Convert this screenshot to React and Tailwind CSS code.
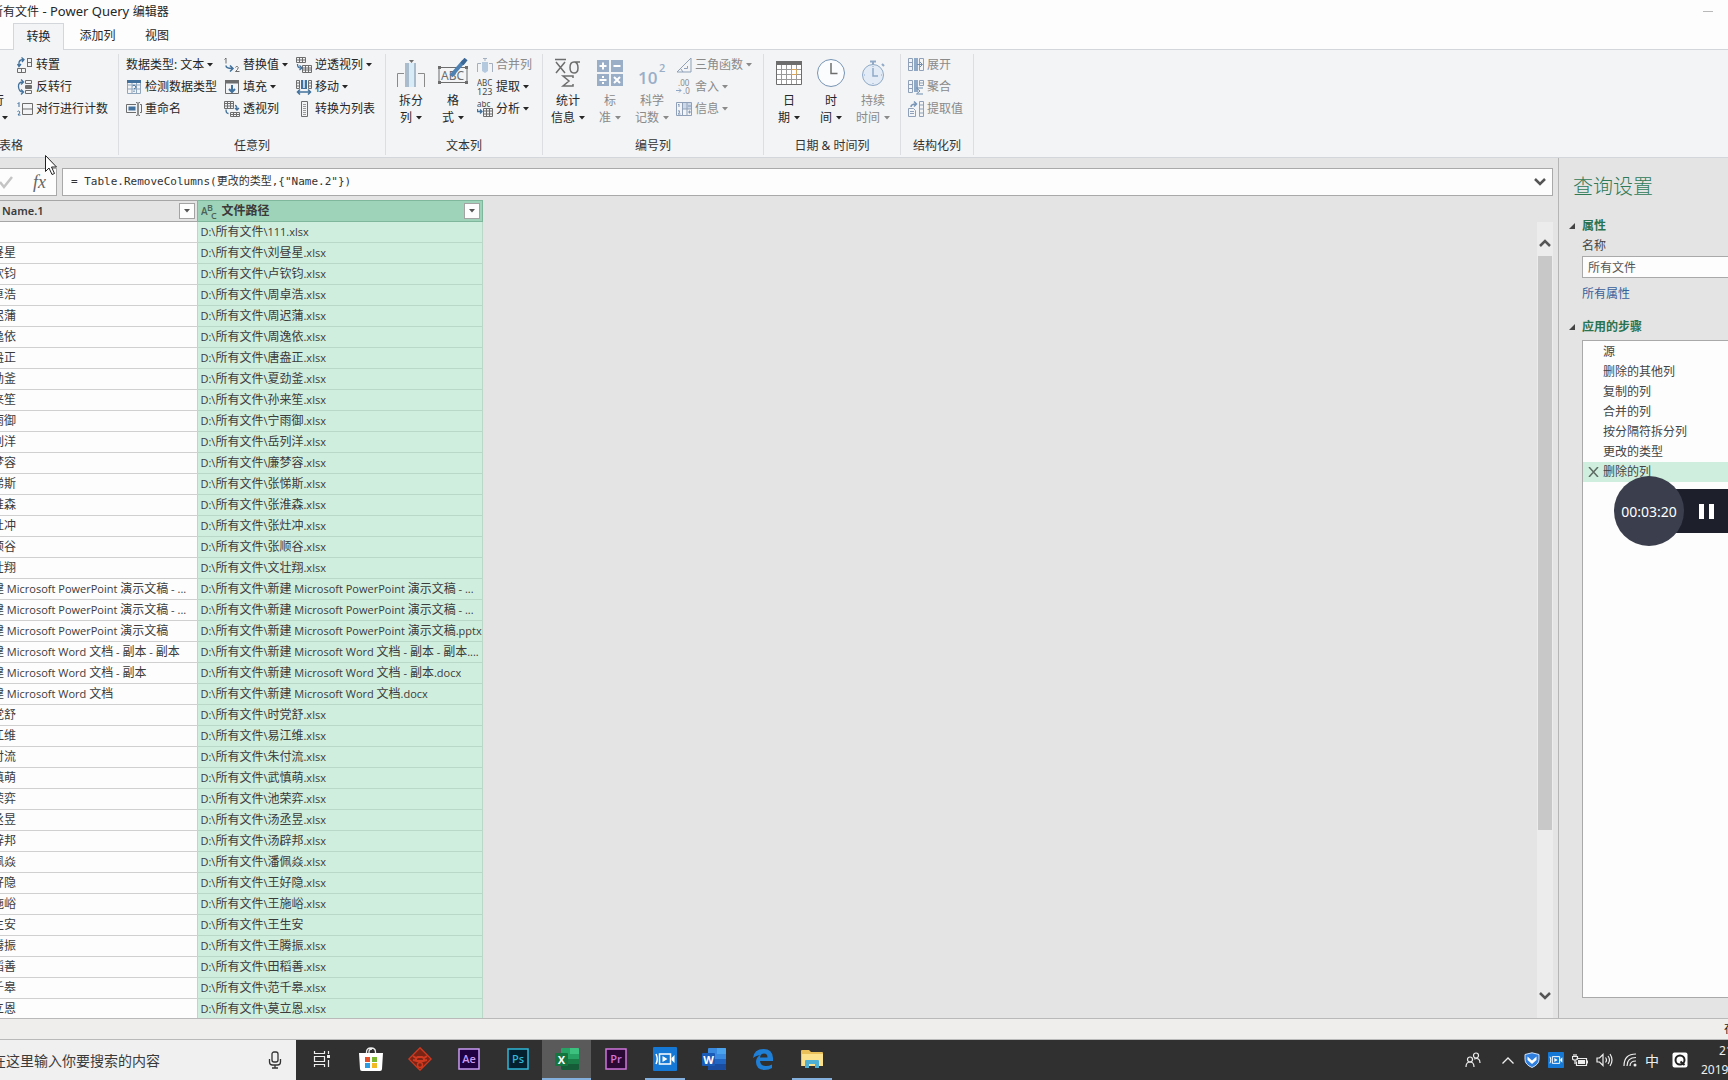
import clsx from "clsx";

const FILES = [
  { name: "", path: "111.xlsx" },
  { name: "刘昼星" },
  { name: "卢钦钧" },
  { name: "周卓浩" },
  { name: "周迟蒲" },
  { name: "周逸依" },
  { name: "唐盎正" },
  { name: "夏劲釜" },
  { name: "孙来笙" },
  { name: "宁雨御" },
  { name: "岳列洋" },
  { name: "廉梦容" },
  { name: "张悌斯" },
  { name: "张淮森" },
  { name: "张灶冲" },
  { name: "张顺谷" },
  { name: "文壮翔" },
  { name: "新建 Microsoft PowerPoint 演示文稿 - ...", path: "新建 Microsoft PowerPoint 演示文稿 - ..." },
  { name: "新建 Microsoft PowerPoint 演示文稿 - ...", path: "新建 Microsoft PowerPoint 演示文稿 - ..." },
  { name: "新建 Microsoft PowerPoint 演示文稿", path: "新建 Microsoft PowerPoint 演示文稿.pptx" },
  { name: "新建 Microsoft Word 文档 - 副本 - 副本", path: "新建 Microsoft Word 文档 - 副本 - 副本...." },
  { name: "新建 Microsoft Word 文档 - 副本", path: "新建 Microsoft Word 文档 - 副本.docx" },
  { name: "新建 Microsoft Word 文档", path: "新建 Microsoft Word 文档.docx" },
  { name: "时党舒" },
  { name: "易江维" },
  { name: "朱付流" },
  { name: "武慎萌" },
  { name: "池荣弈" },
  { name: "汤丞昱" },
  { name: "汤辟邦" },
  { name: "潘佩焱" },
  { name: "王好隐" },
  { name: "王施峪" },
  { name: "王生安", path: "王生安" },
  { name: "王腾振" },
  { name: "田稻善" },
  { name: "范千皋" },
  { name: "莫立恩" },
];

const STEPS = ["源", "删除的其他列", "复制的列", "合并的列", "按分隔符拆分列", "更改的类型", "删除的列"];

const BLUE = "#41719c";
const GRAY = "#6d6d6d";

/* latin runs are set one size smaller than the chinese ones */
function Mixed({ text }) {
  return text.split(/([\x20-\x7e]+)/).map((part, i) =>
    i % 2 ? (
      <span key={i} className="font-['Open_Sans',sans-serif] text-[11px]">
        {part}
      </span>
    ) : (
      part
    )
  );
}

/* ---------- small ribbon icons, 16x16 ---------- */

function Icon({ children, size = 16, className }) {
  return (
    <svg
      width={size}
      height={size}
      viewBox={`0 0 ${size} ${size}`}
      fill="none"
      stroke={GRAY}
      className={clsx("shrink-0", className)}
      aria-hidden="true"
    >
      {children}
    </svg>
  );
}

const TransposeIcon = () => (
  <Icon>
    <rect x="10.5" y="1.5" width="4" height="8" />
    <path d="M10.5 5.5h4M.5 11.5h8v4h-8zM4.500 11.500v4" />
    <path d="M2 9V6q0-3 4-3.500M4.500 .5 7 2.500 5 5M.5 7 2 9.500 4 7" stroke={BLUE} strokeWidth="1.300" />
  </Icon>
);

const ReverseIcon = () => (
  <Icon>
    <path d="M8.500 1.500h6v3h-6zM8.500 6.500h6v3h-6zM8.500 11.500h6v3h-6z" />
    <path d="M9 8h5" strokeWidth="2" />
    <path d="M6 3Q1 3 1.500 8T6 13M4 .5 6.500 3 4 5.500M4 10.500 6.500 13 4 15.500" stroke={BLUE} strokeWidth="1.300" />
  </Icon>
);

const CountIcon = () => (
  <Icon>
    <path d="M5.500 2.500h10v11h-10zM5.500 8h10" />
    <path d="M.5 3 2 1.500V6M.5 10.500q1-1 2 0t-1.500 3.500h2.500" stroke={BLUE} />
  </Icon>
);

const DetectIcon = () => (
  <Icon>
    <path d="M1.500 1.500h13v13h-13zM1.500 6h13M1.500 10h13M6 3v12M10.500 3v12" stroke="#8fa6bd" />
    <path d="M1 1h14v3H1z" fill={BLUE} stroke="none" />
    <path d="M6.500 7q1.500-2 3 0T8 10M8 11.500v1.500" stroke={BLUE} />
  </Icon>
);

const RenameIcon = () => (
  <Icon>
    <path d="M10 3.500H.5v8H10M14 3.500h1.500v8H14" />
    <path d="M2.500 5.500h7v4h-7z" fill={BLUE} stroke="none" />
    <path d="M10 1.500q2 0 2 1v11q0 1-2 1M14 1.500q-2 0-2 1v11q0 1 2 1" />
  </Icon>
);

const ReplaceIcon = () => (
  <Icon>
    <path d="M.5 2.500 2 1v5.500" />
    <path d="M2 8.500q0 3 6 3M6 8.500l3 3-3 3" stroke={BLUE} strokeWidth="1.500" />
    <path d="M11.500 10.500q.5-1.500 2-1t0 3l-2 2h4" />
  </Icon>
);

const FillIcon = () => (
  <Icon>
    <path d="M1.500 2.500h13v12h-13z" />
    <path d="M1 1h14v3.500H1z" fill={GRAY} stroke="none" />
    <path d="M8 6v7M5 10l3 3 3-3" stroke={BLUE} strokeWidth="2" />
  </Icon>
);

const PivotIcon = () => (
  <Icon>
    <path d="M.5 .5h9v7h-9zM.5 2.500h9M.5 5h9M3.500 1v6M6.500 1v6" />
    <path d="M6.500 11.500h9v4h-9zM6.500 13.500h9M9.500 12v3M12.500 12v3" />
    <path d="M2 8.500q0 4 2.500 4M11 4.500q2 0 2 4M11 7l2 2 2-2" stroke={BLUE} strokeWidth="1.300" />
  </Icon>
);

const UnpivotIcon = () => (
  <Icon>
    <path d="M.5 .5h9v5h-9zM.5 3h9M3.500 .5v5M6.500 .5v5M6.500 8.500h9v7h-9zM6.500 11h9M6.500 13h9M9.500 9v6M12.500 9v6" />
    <path d="M1.500 7q0 4 3 4M3.500 8.500 6 11l-2.500 2" stroke={BLUE} strokeWidth="1.300" />
  </Icon>
);

const MoveIcon = () => (
  <Icon>
    <path d="M.5 1.500h3v8h-3zM12.500 1.500h3v8h-3zM1 4h3M12.500 4h3M1 7h3M12.500 7h3" />
    <path d="M5 1h6v9H5z" fill={BLUE} stroke="none" />
    <path d="M8 1v8" stroke="#b8d3ea" strokeWidth="2" />
    <path d="M1.500 13h13M4 10.500 1.500 13 4 15.500M12 10.500l2.500 2.500-2.500 2.500" stroke={BLUE} strokeWidth="1.500" />
  </Icon>
);

const ListIcon = () => (
  <Icon>
    <path d="M5.500 .5h6v15h-6z" />
    <path d="M7 3.500h3M7 5.500h3M7 7.500h3M7 9.500h3M7 11.500h3M7 13.500h3" stroke="#9a9a9a" />
  </Icon>
);

const MergeIcon = () => (
  <Icon>
    <path d="M4 6.500H.5V15M12 6.500h3.500V15" stroke="#a4afc0" />
    <path d="M5 5h6v9l-3 2-3-2z" fill="#b4c8de" stroke="none" />
    <path d="M6 1.500h4M8 1v3" stroke="#a4afc0" />
  </Icon>
);

const ExtractIcon = () => (
  <Icon>
    <text x="0" y="7" fontSize="8" fontFamily="Noto Sans" fill="#4a4a4a" stroke="none">ABC</text>
    <text x="0" y="16" fontSize="9" fontFamily="Noto Sans" fill="#4a4a4a" stroke="none">123</text>
  </Icon>
);

const ParseIcon = () => (
  <Icon>
    <text x="0" y="6" fontSize="8" fontFamily="Noto Sans" fill="#4a4a4a" stroke="none">abc</text>
    <path d="M6.500 7.500h9v8h-9zM6.500 10h9M6.500 13h9M9.500 7.500v8M12.500 7.500v8" />
    <path d="M.5 8v2.500h4M3 8.500l2 2-2 2" stroke={BLUE} strokeWidth="1.300" />
  </Icon>
);

const TrigIcon = () => (
  <Icon>
    <path d="M15 1v14H1zM11.500 9v2.500H8M5 12l2 3" stroke="#8fa0b8" />
  </Icon>
);

const RoundIcon = () => (
  <Icon>
    <text x="2" y="7" fontSize="8" fontFamily="Noto Sans" fill="#8a8a8a" stroke="none">.00</text>
    <text x="7" y="15" fontSize="8" fontFamily="Noto Sans" fill="#8a8a8a" stroke="none">.0</text>
    <path d="M0 11.500h5M3 9.500l2 2-2 2" stroke="#8fa6c4" />
  </Icon>
);

const NumberInfoIcon = () => (
  <Icon>
    <path d="M7 2h8v6H7z" fill="#cdd9e8" stroke="none" />
    <path d="M.5 1.500h15v13H.5zM6.500 2v12M6.500 8h9M11 2v12" stroke="#8fa0b8" />
    <path d="M2 4l1-1v3M2 10q2-1 1.500 1T2 13h2.500M12 11h3M13.500 9.500v3M12 5h3" stroke="#8098b8" />
  </Icon>
);

const ExpandIcon = () => (
  <Icon>
    <path d="M.5 1.500h4v12h-4zM.5 5.500h4M.5 9.500h4M11.500 1.500h4v12h-4z" stroke="#8fa0b8" />
    <path d="M6 1h4v13H6z" fill="#8fa9c6" stroke="none" />
    <path d="M9 7.500h5M12 5l2.500 2.500L12 10" stroke="#6f8db0" />
  </Icon>
);

const AggregateIcon = () => (
  <Icon>
    <path d="M.5 1.500h4v12h-4zM.5 5.500h4M.5 9.500h4M11.500 1.500h4v5h-4zM11.500 4h4" stroke="#8fa0b8" />
    <path d="M6 1h4v12H6z" fill="#8fa9c6" stroke="none" />
    <path d="M15 9H8.500l3.500 3-3.500 3H15" stroke="#6f8db0" />
  </Icon>
);

const ExtractValuesIcon = () => (
  <Icon>
    <path d="M.5 7.500h5l2 2v6h-7zM2 10.500h4M2 12.500h4M11.500 .5h4v15h-4zM11.500 4h4M11.500 8h4M11.500 12h4" stroke="#8fa0b8" />
    <path d="M3 6q0-3 5-3M6 .5 8.500 3 6 5.500" stroke="#7895b8" strokeWidth="1.500" />
  </Icon>
);

/* ---------- large ribbon icons, 30x30 ---------- */

const SplitIcon = () => (
  <Icon size={30}>
    <path d="M8 15.500H1.500V29M22 15.500h6.500V29" stroke="#8a8a8a" />
    <path d="M9 5h11v24H9z" fill="#a9bccd" stroke="none" />
    <path d="M13 5h5v24h-5z" fill="#d8ecf8" stroke="none" />
    <path d="M13 2h5l-2.500 3z" fill={GRAY} stroke="none" />
  </Icon>
);

const FormatIcon = () => (
  <Icon size={30}>
    <path d="M1 9.500h28v15H1z" />
    <text x="3" y="22" fontSize="12" fontFamily="Noto Sans" fill={GRAY} stroke="none">ABC</text>
    <path d="M13 18 26 3" stroke="#4d80b3" strokeWidth="4" />
    <path d="m24 6 4-5" stroke="#3a6796" strokeWidth="4" />
    <path d="M0 8h3v3H0zM27 8h3v3h-3zM0 23h3v3H0zM27 23h3v3h-3z" fill={GRAY} stroke="none" />
  </Icon>
);

const StatsIcon = () => (
  <Icon size={30}>
    <path d="M2 1.500h11M3 4l9 11M12 4 3 15" strokeWidth="1.500" />
    <path d="M27 4h-6q-4 0-4 5.500t4 5.500 4-5-3-6" strokeWidth="1.500" />
    <path d="M20 20v-2H10l6 5-6 5h10v-2" strokeWidth="1.500" />
  </Icon>
);

const StandardIcon = () => (
  <Icon size={30}>
    <path d="M2 2h12v12H2zM16 2h12v12H16zM2 16h12v12H2zM16 16h12v12H16z" fill="#9aaec8" stroke="none" />
    <path d="M4.500 8h7M8 4.500v7M18.500 8h7M4.500 22h7M8 18v2M8 24v2M19 19l6 6M25 19l-6 6" stroke="#fff" strokeWidth="2" />
  </Icon>
);

const ScienceIcon = () => (
  <Icon size={30}>
    <text x="1" y="26" fontSize="17" fontWeight="600" fontFamily="Open Sans" fill="#9aaec8" stroke="none">10</text>
    <text x="22" y="14" fontSize="11" fontWeight="600" fontFamily="Open Sans" fill="#9aaec8" stroke="none">2</text>
  </Icon>
);

const CalendarIcon = () => (
  <Icon size={30}>
    <path d="M2.500 4.500h25v22h-25z" fill="#fff" />
    <path d="M2 3h26v4H2z" fill={GRAY} stroke="none" />
    <path d="M3 11.500h24M3 16.500h24M3 21.500h24M7.500 7v19M12.500 7v19M17.500 7v19M22.500 7v19" stroke="#9a9a9a" />
    <path d="M17.500 11.500h5v5h-5z" stroke="#d9a75c" />
  </Icon>
);

const ClockIcon = () => (
  <Icon size={30}>
    <circle cx="15" cy="15" r="13.500" fill="#fafcfe" stroke="#7794b4" />
    <path d="M15 5v10.500h6.500" strokeWidth="1.500" />
  </Icon>
);

const DurationIcon = () => (
  <Icon size={30}>
    <path d="M12 3.500h6M15 3v4M24 6l2 2" stroke="#8fa9c6" strokeWidth="2" />
    <circle cx="15" cy="17" r="10.500" fill="#e3ecf6" stroke="#8fa9c6" />
    <path d="M15 10v8h5" stroke="#8fa9c6" strokeWidth="1.500" />
    <path d="M15 8v1M15 25v1M6 17h1M23 17h1" stroke="#8fa9c6" />
  </Icon>
);

/* ---------- ribbon parts ---------- */

const Caret = () => (
  <svg width="6" height="4" viewBox="0 0 6 4" className="shrink-0 fill-current" aria-hidden="true">
    <path d="M0 0h6L3 3.500z" />
  </svg>
);

function SmallButton({ icon, label, menu, disabled }) {
  return (
    <button
      disabled={disabled}
      className={clsx(
        "flex h-[22px] items-center gap-[3px] whitespace-nowrap",
        disabled ? "text-[#8a8a8a]" : "text-[#262626]"
      )}
    >
      {icon}
      <span>{label}</span>
      {menu && <Caret />}
    </button>
  );
}

function BigButton({ icon, top, bottom, disabled }) {
  return (
    <button
      disabled={disabled}
      className={clsx(
        "flex w-[42px] shrink-0 flex-col items-center whitespace-nowrap leading-[17px]",
        disabled ? "text-[#8a8a8a]" : "text-[#262626]"
      )}
    >
      <span className="flex h-[38px] items-start pt-1">{icon}</span>
      <span>{top}</span>
      <span className="flex items-center gap-1">
        {bottom}
        <Caret />
      </span>
    </button>
  );
}

function Group({ label, className, children }) {
  return (
    <section className={clsx("flex shrink-0 flex-col border-r border-[#dcdee1]", className)}>
      <div className="flex flex-1">{children}</div>
      <h2 className="h-[18px] text-center leading-[18px] text-[#333]">{label}</h2>
    </section>
  );
}

function Ribbon() {
  return (
    <div className="flex h-[109px] border-y border-[#d3d6da] bg-[#f2f4f6] pt-1 pb-[2px]">
      <Group label="表格" className="w-[215px]">
        <div className="flex flex-1 justify-end gap-[9px] pr-[10px]">
          <button className="flex flex-col items-end justify-start pt-[38px] leading-[17px] text-[#262626]">
            <span className="pr-1">行</span>
            <span className="flex items-center gap-1">
              题
              <Caret />
            </span>
          </button>
          <div>
            <SmallButton icon={<TransposeIcon />} label="转置" />
            <SmallButton icon={<ReverseIcon />} label="反转行" />
            <SmallButton icon={<CountIcon />} label="对行进行计数" />
          </div>
        </div>
      </Group>

      <Group label="任意列" className="w-[267px]">
        <div className="w-[98px] shrink-0 pl-[7px]">
          <SmallButton label="数据类型: 文本" menu />
          <SmallButton icon={<DetectIcon />} label="检测数据类型" />
          <SmallButton icon={<RenameIcon />} label="重命名" />
        </div>
        <div className="ml-[7px] w-[72px]">
          <SmallButton icon={<ReplaceIcon />} label="替换值" menu />
          <SmallButton icon={<FillIcon />} label="填充" menu />
          <SmallButton icon={<PivotIcon />} label="透视列" />
        </div>
        <div>
          <SmallButton icon={<UnpivotIcon />} label="逆透视列" menu />
          <SmallButton icon={<MoveIcon />} label="移动" menu />
          <SmallButton icon={<ListIcon />} label="转换为列表" />
        </div>
      </Group>

      <Group label="文本列" className="w-[157px]">
        <div className="flex pl-1">
          <BigButton icon={<SplitIcon />} top="拆分" bottom="列" />
          <BigButton icon={<FormatIcon />} top="格" bottom="式" />
        </div>
        <div className="pl-[3px]">
          <SmallButton icon={<MergeIcon />} label="合并列" disabled />
          <SmallButton icon={<ExtractIcon />} label="提取" menu />
          <SmallButton icon={<ParseIcon />} label="分析" menu />
        </div>
      </Group>

      <Group label="编号列" className="w-[221px]">
        <div className="flex pl-1">
          <BigButton icon={<StatsIcon />} top="统计" bottom="信息" />
          <BigButton icon={<StandardIcon />} top="标" bottom="准" disabled />
          <BigButton icon={<ScienceIcon />} top="科学" bottom="记数" disabled />
        </div>
        <div className="pl-[3px]">
          <SmallButton icon={<TrigIcon />} label="三角函数" menu disabled />
          <SmallButton icon={<RoundIcon />} label="舍入" menu disabled />
          <SmallButton icon={<NumberInfoIcon />} label="信息" menu disabled />
        </div>
      </Group>

      <Group label="日期 & 时间列" className="w-[137px]">
        <div className="flex pl-1">
          <BigButton icon={<CalendarIcon />} top="日" bottom="期" />
          <BigButton icon={<ClockIcon />} top="时" bottom="间" />
          <BigButton icon={<DurationIcon />} top="持续" bottom="时间" disabled />
        </div>
      </Group>

      <Group label="结构化列" className="w-[73px]">
        <div className="pl-[7px]">
          <SmallButton icon={<ExpandIcon />} label="展开" disabled />
          <SmallButton icon={<AggregateIcon />} label="聚合" disabled />
          <SmallButton icon={<ExtractValuesIcon />} label="提取值" disabled />
        </div>
      </Group>
    </div>
  );
}

/* ---------- editor ---------- */

const Chevron = ({ up }) => (
  <svg width="12" height="8" viewBox="0 0 12 8" fill="none" stroke="#555" strokeWidth="2.500" aria-hidden="true">
    <path d={up ? "M1 7l5-5 5 5" : "M1 1l5 5 5-5"} />
  </svg>
);

function FormulaBar() {
  return (
    <div className="flex h-7 gap-[5px]">
      <div className="flex w-[153px] items-center justify-end gap-5 border border-[#a9a9a9] bg-[#fdfdfd] pr-[10px]">
        <svg width="14" height="14" viewBox="0 0 14 14" fill="none" stroke="#c4c4c4" strokeWidth="2.500" aria-hidden="true">
          <path d="M1 7l4 5 8-10" />
        </svg>
        <span className="font-['Liberation_Serif',serif] text-[18px] leading-6 text-[#666] italic">fx</span>
      </div>
      <div className="flex flex-1 items-center border border-[#a9a9a9] bg-[#fdfdfd] pr-[6px]">
        <input
          aria-label="公式"
          defaultValue={'= Table.RemoveColumns(更改的类型,{"Name.2"})'}
          className="flex-1 bg-transparent pl-2 font-['DejaVu_Sans_Mono','Noto_Sans_CJK_SC',monospace] text-[11px] text-[#333] outline-none"
        />
        <button aria-label="展开公式栏">
          <Chevron />
        </button>
      </div>
    </div>
  );
}

const FilterButton = () => (
  <button
    aria-label="筛选"
    className="flex h-4 w-4 shrink-0 items-center justify-center border border-[#a3a3a3] bg-[#fdfdfd] text-[#555]"
  >
    <Caret />
  </button>
);

function DataGrid() {
  return (
    <table className="w-[579px] shrink-0 table-fixed border-collapse self-start text-left text-[#3b3b3b]">
      <thead>
        <tr className="h-[21px]">
          <th className="w-[72px] border-y border-[#a6a6a6] p-0" />
          <th className="w-[221px] border-y border-[#a6a6a6] p-0">
            <div className="flex items-center justify-between pr-[2px] pl-[26px]">
              <span className="text-[11px] font-semibold">Name.1</span>
              <FilterButton />
            </div>
          </th>
          <th className="border border-[#7fb79c] bg-[#9fd3b9] p-0">
            <div className="flex items-center pr-[2px] pl-[3px]">
              <svg width="17" height="16" viewBox="0 0 17 16" fill="#4b6356" className="mr-1" aria-hidden="true">
                <text x="0" y="12" fontSize="10" fontWeight="600" fontFamily="Open Sans">A</text>
                <text x="6" y="8" fontSize="9" fontWeight="600" fontFamily="Open Sans">B</text>
                <text x="10" y="16" fontSize="9" fontWeight="600" fontFamily="Open Sans">C</text>
              </svg>
              <span className="flex-1 font-bold">文件路径</span>
              <FilterButton />
            </div>
          </th>
        </tr>
      </thead>
      <tbody>
        {FILES.map((f, i) => (
          <tr key={i} className="h-[21px]">
            <td className="border-b border-[#d0d0d0] bg-[#fdfdfd] p-0" />
            <td className="overflow-hidden border-b border-[#d0d0d0] bg-[#fdfdfd] p-0 pl-1 leading-5 whitespace-nowrap">
              <Mixed text={f.name} />
            </td>
            <td className="border border-[#b9d8c8] bg-[#d0eede] p-0 pl-[3px] leading-5 whitespace-nowrap">
              <Mixed text={"D:\\所有文件\\" + (f.path ?? f.name + ".xlsx")} />
            </td>
          </tr>
        ))}
      </tbody>
    </table>
  );
}

function ScrollBar() {
  return (
    <div className="mt-[22px] flex w-4 flex-col items-center bg-[#ececec]">
      <button aria-label="向上滚动" className="flex h-[34px] items-center pt-2">
        <Chevron up />
      </button>
      <div className="flex w-full flex-1 flex-col px-px">
        <div className="basis-4/5 bg-[#c8c8c8]" />
      </div>
      <button aria-label="向下滚动" className="flex h-11 items-center">
        <Chevron />
      </button>
    </div>
  );
}

function SectionTitle({ children }) {
  return (
    <h3 className="flex h-5 items-center gap-[7px] font-bold text-[#2a7350]">
      <svg width="6" height="6" viewBox="0 0 6 6" fill="#444" aria-hidden="true">
        <path d="M6 0v6H0z" />
      </svg>
      {children}
    </h3>
  );
}

function QuerySettings() {
  return (
    <aside className="flex w-[210px] shrink-0 flex-col border-l border-[#b5b5b5] pt-[14px] pb-5 text-[#444]">
      <h2 className="pl-[14px] text-[20px] leading-[30px] font-light text-[#2f7a57]">查询设置</h2>
      <div className="flex flex-col pt-[14px] pl-[10px]">
        <SectionTitle>属性</SectionTitle>
        <div className="flex flex-col items-start pl-[13px]">
          <label htmlFor="query-name" className="leading-5">
            名称
          </label>
          <input
            id="query-name"
            defaultValue="所有文件"
            className="h-[22px] w-full border border-[#a9a9a9] bg-[#fdfdfd] pl-[5px] text-[#555] outline-none"
          />
          <a href="#props" className="mt-[6px] leading-5 text-[#3a5f9a]">
            所有属性
          </a>
        </div>
      </div>
      <div className="flex flex-1 flex-col pt-[13px] pl-[10px]">
        <SectionTitle>应用的步骤</SectionTitle>
        <ul className="mt-[3px] ml-[13px] flex-1 border border-[#a9a9a9] bg-[#fdfdfd] pt-px">
          {STEPS.map((step, i) => {
            const active = i === STEPS.length - 1;
            return (
              <li key={step} className={clsx("flex h-5 items-center pl-[5px]", active && "bg-[#d0eede]")}>
                <span className="flex w-[15px]">
                  {active && (
                    <button aria-label="删除步骤">
                      <svg width="11" height="10" viewBox="0 0 11 10" fill="none" stroke="#5c6b63" strokeWidth="1.500" aria-hidden="true">
                        <path d="M1 0l9 10M10 0 1 10" />
                      </svg>
                    </button>
                  )}
                </span>
                {step}
              </li>
            );
          })}
        </ul>
      </div>
    </aside>
  );
}

/* ---------- taskbar ---------- */

function AdobeIcon({ label, color, bg }) {
  return (
    <svg width="22" height="22" viewBox="0 0 22 22" aria-hidden="true">
      <rect x="1" y="1" width="20" height="20" fill={bg} stroke={color} strokeWidth="1.500" />
      <text x="11" y="15" fontSize="11" fontWeight="600" textAnchor="middle" fontFamily="Open Sans" fill={color}>
        {label}
      </text>
    </svg>
  );
}

function OfficeIcon({ letter, shades, box }) {
  return (
    <svg width="24" height="22" viewBox="0 0 24 22" aria-hidden="true">
      <rect x="6" y="0" width="18" height="22" rx="1" fill={shades[1]} />
      <path d="M15 0h8q1 0 1 1v5h-9z" fill={shades[0]} />
      <path d="M6 11h18v5H6z" fill={shades[2]} />
      <path d="M6 16h18v5q0 1-1 1H7q-1 0-1-1z" fill={shades[3]} />
      <rect x="0" y="5" width="13" height="13" rx="1" fill={box} />
      <text x="6.500" y="16" fontSize="11" fontWeight="700" textAnchor="middle" fontFamily="Open Sans" fill="#fff">
        {letter}
      </text>
    </svg>
  );
}

const TaskViewIcon = () => (
  <svg width="18" height="16" viewBox="0 0 18 16" fill="none" stroke="#eee" aria-hidden="true">
    <path d="M1.500 0v2.500h10V0M1.500 5.500h10v5h-10zM1.500 16v-2.500h10V16M15.500 0v3M15.500 9v7" strokeWidth="1.200" />
    <path d="M14 4h3v3h-3z" fill="#eee" stroke="none" />
  </svg>
);

const StoreIcon = () => (
  <svg width="24" height="24" viewBox="0 0 24 24" fill="none" aria-hidden="true">
    <path d="M7.500 7V5q0-4 4.500-4t4.500 4v2M10 6V5q0-3 3-3" stroke="#eee" strokeWidth="1.300" />
    <path d="M0 6h24l-1 16q0 2-2 2H3q-2 0-2-2z" fill="#fff" />
    <path d="M6 10h5v5H6z" fill="#e8502c" />
    <path d="M13 10h5v5h-5z" fill="#7cb82f" />
    <path d="M6 16h5v5H6z" fill="#2b9de0" />
    <path d="M13 16h5v5h-5z" fill="#f3b925" />
  </svg>
);

const DiamondIcon = () => (
  <svg width="24" height="24" viewBox="0 0 24 24" fill="none" stroke="#d03a20" aria-hidden="true">
    <path d="M12 .8 23.200 12 12 23.200.8 12z" fill="#7a2416" strokeWidth="1.300" />
    <path d="M5 9l3 2 2-1h4l2 1 3-2M5 13l4 1M19 13l-4 1M8 11v3h8v-3" strokeWidth="2" />
    <circle cx="12" cy="18" r="2.500" strokeWidth="1.500" />
  </svg>
);

const RecorderIcon = ({ size = 24 }) => (
  <svg width={size} height={size} viewBox="0 0 24 24" fill="none" stroke="#fff" aria-hidden="true">
    <rect width="24" height="24" rx="1" fill="#1478d4" stroke="none" />
    <path d="M6.500 7h11v10h-11zM3 7q2.500 5 0 10" strokeWidth="1.500" />
    <path d="M9.500 9v6l5-3zM18.500 11l3-3v8l-3-3z" fill="#fff" stroke="none" />
  </svg>
);

const EdgeIcon = () => (
  <svg width="22" height="22" viewBox="0 0 22 22" fill="#1f7fd6" aria-hidden="true">
    <path d="M1 10Q2 1 11.500 1q9 0 9.500 9v3H8q.5 5 6 5 3 0 6-1.500V20q-3 2-7.500 2Q4 21.500 4 14q0-4.500 4-7-4 .5-7 3zM8 9.500h7.500q0-4-3.500-4T8 9.500z" fillRule="evenodd" />
  </svg>
);

const ExplorerIcon = () => (
  <svg width="22" height="20" viewBox="0 0 22 20" aria-hidden="true">
    <path d="M0 2q0-1 1-1h7l2 2h11q1 0 1 1v13H0z" fill="#e9c05a" />
    <path d="M1 5h21v12H1z" fill="#fbe08e" />
    <path d="M4 19v-7q0-1 1-1h12q1 0 1 1v7h-4v-4H8v4z" fill="#4fb0d6" />
  </svg>
);

const APPS = [
  { name: "任务视图", icon: <TaskViewIcon /> },
  { name: "Store", icon: <StoreIcon /> },
  { name: "录屏", icon: <DiamondIcon /> },
  { name: "After Effects", icon: <AdobeIcon label="Ae" color="#c79bf2" bg="#1f0040" /> },
  { name: "Photoshop", icon: <AdobeIcon label="Ps" color="#2fb6d8" bg="#04202e" /> },
  {
    name: "Excel",
    icon: <OfficeIcon letter="X" shades={["#3cc17f", "#27a366", "#1a7d47", "#165c38"]} box="#15753f" />,
    active: true,
  },
  { name: "Premiere", icon: <AdobeIcon label="Pr" color="#cf74dc" bg="#2a0a35" /> },
  { name: "Recorder", icon: <RecorderIcon />, running: true },
  {
    name: "Word",
    icon: <OfficeIcon letter="W" shades={["#4ba3ee", "#3a8be0", "#2266c4", "#1a4da0"]} box="#1b5bb8" />,
  },
  { name: "Edge", icon: <EdgeIcon /> },
  { name: "资源管理器", icon: <ExplorerIcon />, running: true },
];

function Tray() {
  return (
    <div className="flex items-center text-[#eee]">
      <svg width="16" height="16" viewBox="0 0 16 16" fill="none" stroke="currentColor" strokeWidth="1.200" aria-hidden="true">
        <circle cx="5" cy="7.500" r="2.500" />
        <path d="M1 15q0-5 4-5t4 5" />
        <circle cx="11" cy="3.500" r="2.500" />
        <path d="M9 7q6-2 6 4" />
      </svg>
      <svg width="12" height="7" viewBox="0 0 12 7" fill="none" stroke="currentColor" strokeWidth="1.300" className="mr-[10px] ml-[21px]" aria-hidden="true">
        <path d="M.5 6.500 6 1l5.500 5.500" />
      </svg>
      <div className="flex items-center gap-2">
        <svg width="16" height="16" viewBox="0 0 16 16" aria-hidden="true">
          <path d="M8 .8 15 2.500v5q0 5-7 8-7-3-7-8v-5z" fill="#2f7fe0" stroke="#cfe3fa" />
          <path d="M3.500 4.500l4.500 4 4.500-4V8L8 12 3.500 8z" fill="#fff" />
        </svg>
        <RecorderIcon size={16} />
        <svg width="16" height="14" viewBox="0 0 16 14" fill="none" stroke="currentColor" strokeWidth="1.200" aria-hidden="true">
          <path d="M4.500 5.500h10v7h-10v-4M15.500 7.500v3M.5 3.500h5v2q0 1.500-2.500 1.500T.5 5.500zM2 1v2M4 1v2M3 7v4" />
          <path d="M6 7h7v4H6z" fill="currentColor" stroke="none" />
        </svg>
        <svg width="17" height="14" viewBox="0 0 17 14" fill="none" stroke="currentColor" strokeWidth="1.200" aria-hidden="true">
          <path d="M1 5v4h2.500L7 12.500v-11L3.500 5zM9.500 4.500q2 2.500 0 5M12 3q3 4 0 8M14 1q4 6 0 12" />
        </svg>
        <svg width="14" height="14" viewBox="0 0 14 14" fill="none" stroke="currentColor" strokeWidth="1.200" className="ml-[2px]" aria-hidden="true">
          <path d="M1 13Q1 1 13 1M4 13q0-8.500 9-8.500M7 13q0-5 6-5" />
          <circle cx="12" cy="12" r="1.500" fill="currentColor" stroke="none" />
        </svg>
      </div>
      <span className="ml-2 text-[14px]">中</span>
      <svg width="16" height="16" viewBox="0 0 16 16" fill="none" className="ml-[13px]" aria-hidden="true">
        <rect x=".5" y=".5" width="15" height="15" rx="2" fill="#fff" />
        <circle cx="8" cy="8" r="4.500" stroke="#222" strokeWidth="2" />
        <path d="M8.500 9.500l4 3.500" stroke="#222" strokeWidth="2" />
      </svg>
      <div className="ml-[13px] flex w-[67px] flex-col leading-[19px] whitespace-nowrap">
        <span className="pl-[18px]">21</span>
        <span>2019</span>
      </div>
    </div>
  );
}

function TaskBar() {
  return (
    <footer className="flex h-10 shrink-0 bg-[#303030]">
      <label className="flex w-[392px] items-center bg-[#f0f0f0] pr-[14px] pl-[88px]">
        <input
          aria-label="搜索"
          placeholder="在这里输入你要搜索的内容"
          className="flex-1 bg-transparent text-[14px] outline-none placeholder:text-[#3a3a3a]"
        />
        <svg width="14" height="18" viewBox="0 0 14 18" fill="none" stroke="#333" strokeWidth="1.300" aria-hidden="true">
          <rect x="4" y="1" width="6" height="10" rx="2" />
          <path d="M1.500 8v3q0 3 3 3h5q3 0 3-3V8M7 14v3M4 17h6" />
        </svg>
      </label>
      <nav className="flex flex-1 pl-px">
        {APPS.map((app) => (
          <button
            key={app.name}
            aria-label={app.name}
            className={clsx("flex w-[49px] flex-col items-center", app.active && "bg-[#5a5a5a]")}
          >
            <span className="flex flex-1 items-center">{app.icon}</span>
            <span
              className={clsx(
                "h-[2px]",
                app.active ? "w-full bg-[#83b0dc]" : "w-10",
                app.running && "bg-[#83b0dc]"
              )}
            />
          </button>
        ))}
      </nav>
      <Tray />
    </footer>
  );
}

function RecordTimer() {
  return (
    <div className="absolute top-[476px] right-0 flex w-[114px] items-center">
      <div className="z-10 flex h-[70px] w-[70px] shrink-0 items-center justify-center rounded-full bg-[#3b3e4c] text-[14px] text-white">
        00:03:20
      </div>
      <button aria-label="暂停" className="-ml-3 flex h-11 flex-1 items-center justify-end gap-[5px] bg-[#1d1f2a] pr-[14px]">
        <span className="h-[15px] w-[5px] bg-white" />
        <span className="h-[15px] w-[5px] bg-white" />
      </button>
    </div>
  );
}

export default function App() {
  return (
    <div className="relative h-screen overflow-hidden bg-[#e4e4e4] font-['Noto_Sans','Noto_Sans_CJK_SC',sans-serif] text-[12px] text-[#262626]">
      {/* the window runs past both screen edges */}
      <div className="-mr-10 -ml-24 flex h-full flex-col">
        <header className="bg-[#fdfdfd]">
          <div className="flex h-[23px] items-center justify-between pr-[55px] pl-[87px]">
            <h1>
              所有文件<span className="text-[13px]"> - Power Query </span>编辑器
            </h1>
            <button aria-label="最小化" className="h-px w-[10px] bg-[#b8b8b8]" />
          </div>
          <nav className="flex h-[26px] pl-[109px]">
            <button className="z-10 -mb-px w-[51px] border border-b-0 border-[#d3d6da] bg-[#f2f4f6]">转换</button>
            <button className="w-[67px]">添加列</button>
            <button className="w-[52px]">视图</button>
          </nav>
        </header>
        <Ribbon />

        <div className="flex min-h-0 flex-1">
          <main className="flex min-w-0 flex-1 flex-col overflow-hidden pt-[10px] pr-[5px]">
            <FormulaBar />
            <div className="mt-1 flex min-h-0 flex-1 justify-between">
              <DataGrid />
              <ScrollBar />
            </div>
          </main>
          <QuerySettings />
        </div>

        <div className="h-[22px] shrink-0 border-y border-[#b9b9b9] bg-[#f0eeec] pr-[32px] text-right leading-5">在</div>
        <TaskBar />
      </div>

      <RecordTimer />
      <svg width="13" height="20" viewBox="0 0 13 20" className="absolute top-[155px] left-[45px]" aria-hidden="true">
        <path d="M.5 .5v16l3.500-3.500 3 6.500 2.500-1-3-6.500h5z" fill="#fff" stroke="#222" />
      </svg>
    </div>
  );
}
